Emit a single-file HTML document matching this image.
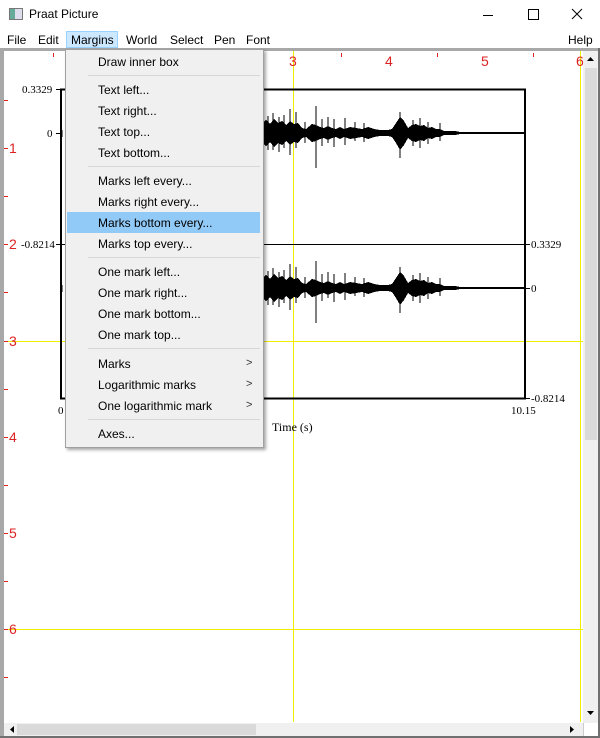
<!DOCTYPE html>
<html><head><style>
body{margin:0;width:600px;height:738px;overflow:hidden;background:#fff;font-family:"Liberation Sans",sans-serif;position:relative}
.a{position:absolute}
.mb span{position:absolute;top:33px;font-size:12px;color:#000}
.menu{left:65px;top:49px;width:197px;height:397px;background:#f0f0f0;border:1px solid #a0a0a0;box-shadow:2px 2px 3px rgba(0,0,0,.35)}
.mi{position:absolute;left:32px;font-size:12px;color:#000;line-height:14px}
.sep{position:absolute;left:22px;width:172px;height:1px;background:#d7d7d7}
.arr{position:absolute;left:180px;font-size:11px;color:#333}
</style></head><body>
<div class="a" style="left:0;top:0;width:600px;height:30px;background:#fff"></div>
<div class="a" style="left:9px;top:8px;width:12px;height:10px;border:1px solid #777;background:linear-gradient(90deg,#6a9 0 40%,#dde 40%)"></div>
<div class="a" style="left:29px;top:7px;font-size:12px">Praat Picture</div>
<div class="a" style="left:483px;top:15px;width:10px;height:1px;background:#000"></div>
<div class="a" style="left:528px;top:9px;width:9px;height:9px;border:1px solid #000"></div>
<svg class="a" style="left:571px;top:8px" width="12" height="12"><path d="M1 1L11 11M11 1L1 11" stroke="#000" stroke-width="1"/></svg>
<div class="mb">
<span style="left:7px">File</span><span style="left:38px">Edit</span>
<div class="a" style="left:66px;top:31px;width:52px;height:17px;background:#cce8ff;border:1px solid #99d1ff;box-sizing:border-box"></div>
<span style="left:71px">Margins</span><span style="left:126px">World</span><span style="left:170px">Select</span><span style="left:214px">Pen</span><span style="left:246px">Font</span><span style="left:568px">Help</span>
</div>
<div class="a" style="left:0;top:48px;width:600px;height:3px;background:#a8a8a8"></div>
<div class="a" style="left:0;top:48px;width:4px;height:690px;background:#a8a8a8"></div>
<div class="a" style="left:598px;top:48px;width:2px;height:690px;background:#707070"></div>
<div class="a" style="left:0;top:736px;width:600px;height:2px;background:#707070"></div>
<svg class="a" style="left:0;top:0" width="600" height="738" shape-rendering="crispEdges">
<g fill="#eeee00" stroke="none">
<rect x="293" y="51" width="1" height="671"/><rect x="580" y="51" width="1" height="671"/>
<rect x="4" y="341" width="579" height="1"/><rect x="4" y="629" width="579" height="1"/>
</g>
<g fill="#d22" font-family="Liberation Sans" font-size="14" stroke="none" shape-rendering="auto">
<text x="289" y="66">3</text><text x="385" y="66">4</text><text x="481" y="66">5</text><text x="576" y="66">6</text>
<text x="9" y="153">1</text><text x="9" y="249">2</text><text x="9" y="346">3</text><text x="9" y="442">4</text><text x="9" y="538">5</text><text x="9" y="634">6</text><text x="9" y="735">7</text>
</g>
<g fill="#d22">
<rect x="53" y="53" width="1" height="4"/><rect x="341" y="53" width="1" height="4"/><rect x="437" y="53" width="1" height="4"/><rect x="533" y="53" width="1" height="4"/>
<rect x="4" y="100" width="4" height="1"/><rect x="4" y="148" width="4" height="1"/><rect x="4" y="196" width="4" height="1"/><rect x="4" y="244" width="4" height="1"/><rect x="4" y="292" width="4" height="1"/><rect x="4" y="341" width="4" height="1"/><rect x="4" y="389" width="4" height="1"/><rect x="4" y="437" width="4" height="1"/><rect x="4" y="485" width="4" height="1"/><rect x="4" y="533" width="4" height="1"/><rect x="4" y="581" width="4" height="1"/><rect x="4" y="629" width="4" height="1"/><rect x="4" y="677" width="4" height="1"/>
</g>
<g stroke="#000" fill="none">
<rect x="61" y="89.5" width="464" height="309" stroke-width="2"/>
<line x1="61" y1="244.5" x2="525" y2="244.5" stroke-width="1"/>
<line x1="56" y1="89.5" x2="61" y2="89.5"/><line x1="56" y1="133.5" x2="61" y2="133.5"/><line x1="56" y1="244.5" x2="61" y2="244.5"/>
<line x1="525" y1="244.5" x2="530" y2="244.5"/><line x1="525" y1="288.5" x2="530" y2="288.5"/><line x1="525" y1="398.5" x2="530" y2="398.5"/>
</g>
<g font-family="Liberation Serif" font-size="11" fill="#000" shape-rendering="auto">
<text x="22" y="93">0.3329</text><text x="47" y="137">0</text><text x="21" y="248">-0.8214</text>
<text x="531" y="248">0.3329</text><text x="531" y="292">0</text><text x="531" y="402">-0.8214</text>
<text x="58" y="414">0</text><text x="511" y="414">10.15</text>
<text x="272" y="431" font-size="12">Time (s)</text>
</g>
<g id="w" fill="#000">
<polygon points="258,125 262,123 266,120 270,124 274,119 278,123 282,121 286,125 290,121 294,124 298,123 302,128 306,129 312,124 316,125 320,127 324,128 328,126 332,128 336,129 340,127 344,129 350,127 356,128 362,129 368,127 374,129 380,130 388,130 392,129 396,123 400,117 404,121 408,128 412,125 416,124 420,126 424,125 428,128 432,127 436,129 440,129 444,131 455,131 460,132 525,132 525,134 460,134 455,135 444,135 440,137 436,137 432,139 428,138 424,141 420,140 416,142 412,141 408,138 404,145 400,150 396,143 392,137 388,136 380,136 374,137 368,139 362,137 356,138 350,139 344,137 340,139 336,137 332,138 328,140 324,138 320,139 316,141 312,142 306,137 302,138 298,143 294,142 290,145 286,141 282,145 278,143 274,147 270,142 266,146 262,143 258,141"/>
<g stroke="#000" stroke-width="1">
<line x1="268" y1="116" x2="268" y2="150"/><line x1="273" y1="113" x2="273" y2="150"/><line x1="279" y1="117" x2="279" y2="152"/><line x1="284" y1="115" x2="284" y2="148"/><line x1="290" y1="109" x2="290" y2="155"/><line x1="296" y1="112" x2="296" y2="148"/><line x1="305" y1="122" x2="305" y2="143"/><line x1="316" y1="106" x2="316" y2="168"/><line x1="322" y1="119" x2="322" y2="146"/><line x1="328" y1="117" x2="328" y2="143"/><line x1="334" y1="119" x2="334" y2="147"/><line x1="345" y1="118" x2="345" y2="145"/><line x1="355" y1="122" x2="355" y2="141"/><line x1="364" y1="123" x2="364" y2="142"/><line x1="400" y1="112" x2="400" y2="158"/><line x1="413" y1="120" x2="413" y2="146"/><line x1="420" y1="118" x2="420" y2="148"/><line x1="428" y1="122" x2="428" y2="144"/><line x1="440" y1="123" x2="440" y2="141"/><line x1="62" y1="130" x2="62" y2="137"/>
</g>
</g>
<use href="#w" transform="translate(0,155)"/>
</svg>
<div class="a" style="left:583px;top:51px;width:15px;height:672px;background:#f0f0f0"></div>
<div class="a" style="left:585px;top:68px;width:12px;height:372px;background:#dadada"></div>
<svg class="a" style="left:583px;top:51px" width="15" height="672"><path d="M4 10L7.5 6L11 10Z" fill="#000"/><path d="M4 660L7.5 664L11 660Z" fill="#000"/></svg>
<div class="a" style="left:4px;top:723px;width:579px;height:13px;background:#f0f0f0"></div>
<div class="a" style="left:17px;top:724px;width:239px;height:11px;background:#dadada"></div>
<svg class="a" style="left:4px;top:723px" width="579" height="13"><path d="M10 3L6 6.5L10 10Z" fill="#000"/><path d="M566 3L570 6.5L566 10Z" fill="#000"/></svg>
<div class="a" style="left:583px;top:723px;width:15px;height:13px;background:#fff;border-left:1px solid #ccc;box-sizing:border-box"></div>
<div class="a menu">
<div class="mi" style="top:5px">Draw inner box</div>
<div class="sep" style="top:25px"></div>
<div class="mi" style="top:33px">Text left...</div>
<div class="mi" style="top:54px">Text right...</div>
<div class="mi" style="top:75px">Text top...</div>
<div class="mi" style="top:96px">Text bottom...</div>
<div class="sep" style="top:116px"></div>
<div class="mi" style="top:124px">Marks left every...</div>
<div class="mi" style="top:145px">Marks right every...</div>
<div class="a" style="left:1px;top:162px;width:193px;height:21px;background:#91c9f7"></div>
<div class="mi" style="top:166px">Marks bottom every...</div>
<div class="mi" style="top:187px">Marks top every...</div>
<div class="sep" style="top:207px"></div>
<div class="mi" style="top:215px">One mark left...</div>
<div class="mi" style="top:236px">One mark right...</div>
<div class="mi" style="top:257px">One mark bottom...</div>
<div class="mi" style="top:278px">One mark top...</div>
<div class="sep" style="top:298px"></div>
<div class="mi" style="top:307px">Marks</div><div class="arr" style="top:307px">&gt;</div>
<div class="mi" style="top:328px">Logarithmic marks</div><div class="arr" style="top:328px">&gt;</div>
<div class="mi" style="top:349px">One logarithmic mark</div><div class="arr" style="top:349px">&gt;</div>
<div class="sep" style="top:369px"></div>
<div class="mi" style="top:377px">Axes...</div>
</div>
</body></html>
